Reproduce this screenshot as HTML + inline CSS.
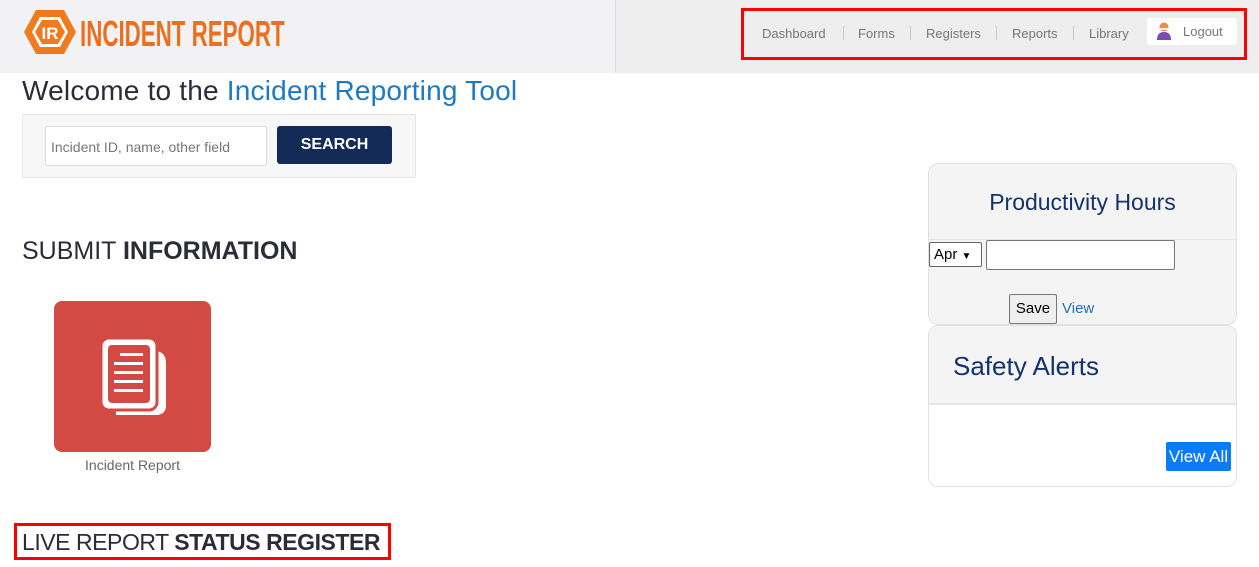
<!DOCTYPE html>
<html><head><meta charset="utf-8"><style>
*{box-sizing:border-box;margin:0;padding:0}
body{width:1259px;height:567px;overflow:hidden;background:#fff;font-family:"Liberation Sans","DejaVu Sans",sans-serif;position:relative;color:#2b2b3a}
.a{position:absolute}
.hl{left:0;top:0;width:615px;height:73px;background:#f2f2f4}
.hr{left:615px;top:0;width:644px;height:73px;background:#eeeeee;border-left:1px solid #ddd}
.nav{left:741px;top:8px;width:506px;height:52px;border:3px solid #f00}
.logout{left:1147px;top:18px;width:90px;height:27px;background:#fff;border-radius:3px}
</style></head><body>
<div class="a hl"></div><div class="a hr"></div>
<div class="a" style="left:22px;top:8px;width:265px;height:48px">
<svg width="56" height="48" viewBox="0 0 56 48" style="position:absolute;left:0;top:0"><polygon points="14,2 42,2 54,24 42,46 14,46 2,24" fill="#f07a1e"/><polygon points="18,9 38,9 46,24 38,39 18,39 10,24" fill="#fff"/><polygon points="20,12 36,12 43,24 36,36 20,36 13,24" fill="#f07a1e"/><text x="28" y="31" text-anchor="middle" font-family="Liberation Sans" font-weight="bold" font-size="17" fill="#fff">IR</text></svg>
<div style="position:absolute;left:58px;top:5px;font-family:'Liberation Sans Narrow','Liberation Sans',sans-serif;font-weight:bold;font-size:36px;color:#ee6f1b;transform:scaleX(0.62);transform-origin:left;white-space:nowrap">INCIDENT REPORT</div>
</div>
<div class="a nav"></div>
<span class="a" style="left:762px;top:26px;font-size:13px;color:#777">Dashboard</span>
<div class="a" style="left:843px;top:26px;width:1px;height:14px;background:#ccc"></div>
<span class="a" style="left:858px;top:26px;font-size:13px;color:#777">Forms</span>
<div class="a" style="left:910px;top:26px;width:1px;height:14px;background:#ccc"></div>
<span class="a" style="left:926px;top:26px;font-size:13px;color:#777">Registers</span>
<div class="a" style="left:996px;top:26px;width:1px;height:14px;background:#ccc"></div>
<span class="a" style="left:1012px;top:26px;font-size:13px;color:#777">Reports</span>
<div class="a" style="left:1073px;top:26px;width:1px;height:14px;background:#ccc"></div>
<span class="a" style="left:1089px;top:26px;font-size:13px;color:#777">Library</span>
<div class="a logout"></div>
<svg class="a" style="left:1156px;top:22px" width="16" height="18" viewBox="0 0 16 18"><circle cx="8" cy="5" r="4.5" fill="#f08a4b"/><path d="M1 18 Q1 10 8 10 Q15 10 15 18Z" fill="#7a4bb5"/><rect x="4" y="6" width="8" height="2" fill="#eee"/></svg>
<span class="a" style="left:1183px;top:24px;font-size:13px;color:#777">Logout</span>

<div class="a" style="left:22px;top:75px;font-size:28px;letter-spacing:0.2px;color:#2b2b3a;white-space:nowrap">Welcome to the <span style="color:#1a7ac4">Incident Reporting Tool</span></div>
<div class="a" style="left:22px;top:114px;width:394px;height:64px;background:#f7f7f7;border:1px solid #e6e6e6;border-radius:2px"></div>
<div class="a" style="left:45px;top:126px;width:222px;height:40px;background:#fff;border:1px solid #ddd;border-radius:2px;font-size:14px;color:#777;padding:12px 0 0 5px">Incident ID, name, other field</div>
<div class="a" style="left:277px;top:126px;width:115px;height:38px;background:#142a57;border-radius:3px;color:#fff;font-weight:bold;font-size:16px;text-align:center;line-height:38px">SEARCH</div>

<div class="a" style="left:22px;top:237px;font-size:25px;color:#2b2b3a">SUBMIT <b>INFORMATION</b></div>
<div class="a" style="left:54px;top:301px;width:157px;height:151px;background:#d24a43;border-radius:8px"></div>
<svg class="a" style="left:54px;top:301px" width="157" height="151" viewBox="0 0 157 151">
<path d="M62 50 H100 Q112 50 112 62 V104 Q112 114 102 114 H62" fill="#fff"/>
<rect x="47" y="37" width="56" height="72" rx="8" fill="#fff" stroke="#d24a43" stroke-width="3"/>
<rect x="54" y="44" width="42" height="58" rx="4" fill="#d24a43"/>
<g fill="#fff"><rect x="66" y="52" width="23" height="3"/><rect x="60" y="61" width="29" height="3"/><rect x="60" y="70" width="29" height="3"/><rect x="60" y="79" width="29" height="3"/><rect x="60" y="88" width="29" height="3"/></g>
</svg>
<div class="a" style="left:54px;top:457px;width:157px;text-align:center;font-size:14px;color:#666">Incident Report</div>

<div class="a" style="left:14px;top:523px;width:377px;height:37px;border:3px solid #f00"></div>
<div class="a" style="left:22px;top:529px;font-size:23px;letter-spacing:-0.45px;color:#2b2b3a;white-space:nowrap">LIVE REPORT <b>STATUS REGISTER</b></div>

<div class="a" style="left:928px;top:163px;width:309px;height:162px;background:#f4f4f4;border:1px solid #e2e2e2;border-radius:10px"></div>
<div class="a" style="left:929px;top:239px;width:307px;height:1px;background:#e4e4e4"></div>
<div class="a" style="left:928px;top:189px;width:309px;text-align:center;font-size:23px;color:#13336b">Productivity Hours</div>
<div class="a" style="left:929px;top:242px;width:53px;height:25px;background:#fff;border:1px solid #666;border-radius:2px;font-size:15px;color:#000;padding:3px 0 0 4px">Apr <span style="font-size:10px">&#9660;</span></div>
<div class="a" style="left:986px;top:240px;width:189px;height:30px;background:#fff;border:1px solid #777;border-radius:2px"></div>
<div class="a" style="left:1009px;top:294px;width:48px;height:30px;background:#efefef;border:1px solid #777;border-radius:2px;font-size:15px;color:#000;text-align:center;line-height:28px">Save</div>
<div class="a" style="left:1062px;top:300px;font-size:15px;color:#1a6fc0">View</div>

<div class="a" style="left:928px;top:325px;width:309px;height:162px;background:#fff;border:1px solid #e2e2e2;border-radius:10px;overflow:hidden"><div style="height:79px;background:#f4f4f4;border-bottom:2px solid #e4e4e4"></div></div>
<div class="a" style="left:953px;top:351px;font-size:26px;color:#13336b">Safety Alerts</div>
<div class="a" style="left:1166px;top:442px;width:65px;height:29px;background:#0a7cf5;border-radius:2px;color:#fff;font-size:17px;text-align:center;line-height:29px">View All</div>
</body></html>
